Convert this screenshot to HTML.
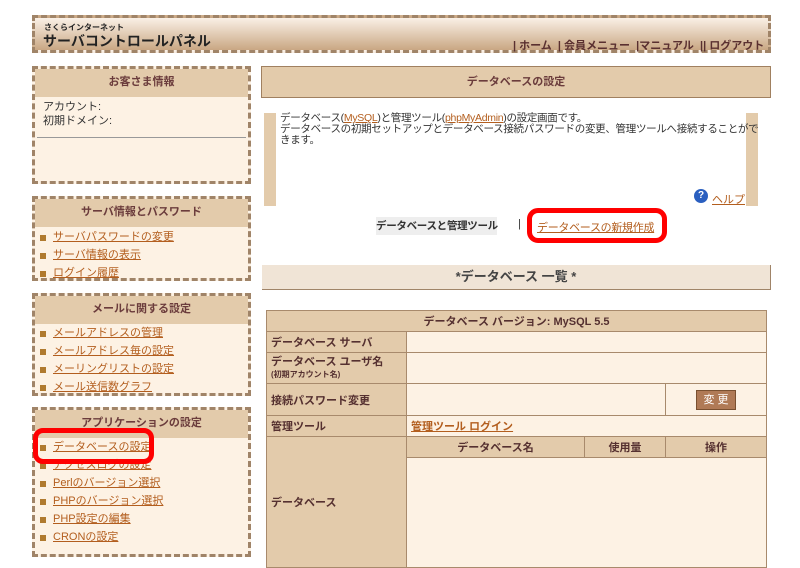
<!DOCTYPE html>
<html><head><meta charset="utf-8"><style>
*{margin:0;padding:0;box-sizing:border-box}
body{width:800px;height:550px;background:#fff;position:relative;overflow:hidden;font-family:"Liberation Sans","Noto Sans CJK JP",sans-serif;font-size:11px;color:#333}
.a{position:absolute;white-space:nowrap}
.dash{border:3px dashed #a08468}
.hd{background:#e3cbab;color:#6b3c3c;font-weight:bold;text-align:center}
.lk{color:#b35e1e;text-decoration:underline}
ul{list-style:none}
li{height:18px;line-height:18px;padding-left:18px;position:relative}
li:before{content:"";position:absolute;left:5px;top:7px;width:6px;height:6px;background:#b07a2e}
table{table-layout:fixed}
td{border:1px solid #a88a6c;font-size:11px;padding:0 4px;white-space:nowrap;overflow:hidden}
.th{background:#e3cbab;font-weight:bold;color:#553030}
.tv{background:#fdf2e4}
</style></head><body>
<div class="a dash" style="left:32px;top:15px;width:739px;height:38px;background:linear-gradient(#faf0e6,#c9a783)"></div>
<div class="a" style="left:44px;top:22px;font-size:8px;font-weight:bold;color:#222">さくらインターネット</div>
<div class="a" style="left:43px;top:31px;font-size:14px;font-weight:bold;color:#222">サーバコントロールパネル</div>
<div class="a" style="left:513px;top:37px;font-size:11px;font-weight:bold;color:#5a3030">| ホーム &nbsp;| 会員メニュー &nbsp;|マニュアル &nbsp;|| ログアウト</div>

<div class="a dash" style="left:32px;top:66px;width:219px;height:118px;background:#fdf2e4">
<div class="hd" style="height:28px;line-height:26px">お客さま情報</div>
<div style="padding:3px 8px;line-height:14px">アカウント:<br>初期ドメイン:</div>
<div style="margin:6px 2px 0;border-top:1px solid #999"></div></div>

<div class="a dash" style="left:32px;top:196px;width:219px;height:85px;background:#fdf2e4">
<div class="hd" style="height:28px;line-height:26px">サーバ情報とパスワード</div>
<ul style="padding-top:1px"><li><span class="lk">サーバパスワードの変更</span></li><li><span class="lk">サーバ情報の表示</span></li><li><span class="lk">ログイン履歴</span></li></ul></div>

<div class="a dash" style="left:32px;top:293px;width:219px;height:103px;background:#fdf2e4">
<div class="hd" style="height:28px;line-height:26px">メールに関する設定</div>
<ul><li><span class="lk">メールアドレスの管理</span></li><li><span class="lk">メールアドレス毎の設定</span></li><li><span class="lk">メーリングリストの設定</span></li><li><span class="lk">メール送信数グラフ</span></li></ul></div>

<div class="a dash" style="left:32px;top:407px;width:219px;height:150px;background:#fdf2e4">
<div class="hd" style="height:28px;line-height:26px">アプリケーションの設定</div>
<ul><li><span class="lk">データベースの設定</span></li><li><span class="lk">アクセスログの設定</span></li><li><span class="lk">Perlのバージョン選択</span></li><li><span class="lk">PHPのバージョン選択</span></li><li><span class="lk">PHP設定の編集</span></li><li><span class="lk">CRONの設定</span></li></ul></div>
<div class="a" style="left:33px;top:428px;width:121px;height:36px;border:5px solid #f00;border-radius:10px"></div>

<div class="a hd" style="left:261px;top:66px;width:510px;height:32px;line-height:30px;border:1px solid #a08060">データベースの設定</div>
<div class="a" style="left:264px;top:113px;width:12px;height:93px;background:#e3cbab"></div>
<div class="a" style="left:746px;top:113px;width:12px;height:93px;background:#e3cbab"></div>
<div class="a" style="left:280px;top:113px;line-height:11px;font-size:10.5px;letter-spacing:-0.3px">データベース(<span class="lk">MySQL</span>)と管理ツール(<span class="lk">phpMyAdmin</span>)の設定画面です。<br>データベースの初期セットアップとデータベース接続パスワードの変更、管理ツールへ接続することがで<br>きます。</div>
<div class="a" style="left:694px;top:189px;width:14px;height:14px;border-radius:50%;background:#2a5fc0;color:#fff;font-size:10px;font-weight:bold;text-align:center;line-height:14px">?</div>
<div class="a lk" style="left:712px;top:191px">ヘルプ</div>

<div class="a" style="left:376px;top:217px;width:121px;height:18px;background:#eee;font-weight:bold;line-height:18px;text-align:center;font-size:10.5px;letter-spacing:-0.3px">データベースと管理ツール</div>
<div class="a" style="left:518px;top:218px">|</div>
<div class="a lk" style="left:537px;top:219px;letter-spacing:-0.3px">データベースの新規作成</div>
<div class="a" style="left:527px;top:208px;width:140px;height:35px;border:5px solid #f00;border-radius:11px"></div>

<div class="a" style="left:262px;top:265px;width:509px;height:25px;background:#f0e4d6;border-bottom:1px solid #a08468;border-right:1px solid #a08468;text-align:center;font-size:13px;font-weight:bold;line-height:24px;color:#444">*データベース 一覧 *</div>

<table class="a" style="left:266px;top:310px;width:500px;border-collapse:collapse">
<colgroup><col style="width:140px"><col style="width:178px"><col style="width:81px"><col style="width:101px"></colgroup>
<tr style="height:21px"><td colspan="4" class="th" style="text-align:center">データベース バージョン: MySQL 5.5</td></tr>
<tr style="height:21px"><td class="th">データベース サーバ</td><td colspan="3" class="tv"></td></tr>
<tr style="height:31px"><td class="th" style="line-height:12px">データベース ユーザ名<br><span style="font-size:8px">(初期アカウント名)</span></td><td colspan="3" class="tv"></td></tr>
<tr style="height:32px"><td class="th">接続パスワード変更</td><td colspan="2" class="tv"></td><td class="tv" style="text-align:center"><span style="display:inline-block;width:40px;height:20px;background:#b07a56;border:1px solid #7a5030;color:#fff;line-height:18px;font-size:11px">変 更</span></td></tr>
<tr style="height:21px"><td class="th">管理ツール</td><td colspan="3" class="tv"><span class="lk" style="font-weight:bold">管理ツール ログイン</span></td></tr>
<tr style="height:21px"><td class="th" rowspan="2">データベース</td><td class="th" style="text-align:center">データベース名</td><td class="th" style="text-align:center">使用量</td><td class="th" style="text-align:center">操作</td></tr>
<tr style="height:110px"><td colspan="3" class="tv"></td></tr>
</table>
</body></html>
